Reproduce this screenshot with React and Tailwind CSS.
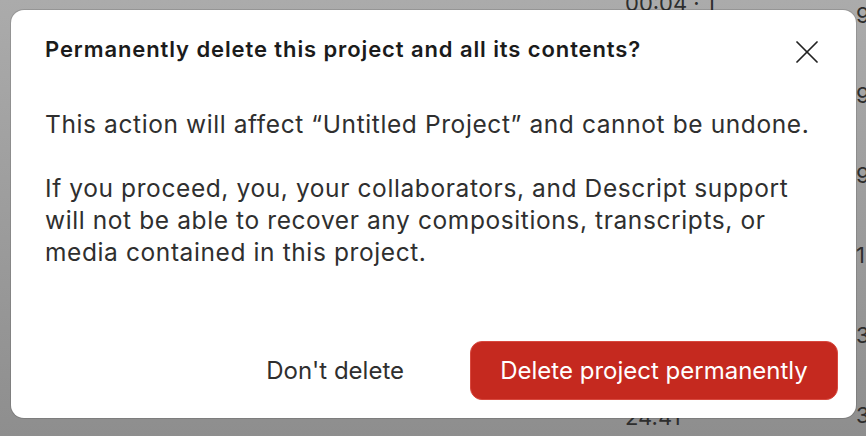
const font = { fontFamily: 'Inter, "Noto Sans", sans-serif' };

// ── Dimmed app behind the dialog ─────────────────────────────────────────────
function Backdrop() {
  const digits = ['9', '9', '9', '1', '3', '3'];
  return (
    <div className="absolute inset-0 bg-gradient-to-b from-[#ababab] to-[#8e8e8e] overflow-hidden">
      <div className="flex h-full">
        <div className="flex-1 flex flex-col justify-between pl-[625px]">
          <span className="text-[22px] leading-none text-[#2e2e2e] -mt-[8px]">00:04 · 1</span>
          <span className="text-[22px] leading-none text-[#2e2e2e] mb-[8px]">24.41</span>
        </div>
        <div className="w-[10px] flex flex-col gap-[58px] pt-[4px] text-[22px] leading-none text-[#2e2e2e]">
          {digits.map((d, i) => <span key={i}>{d}</span>)}
        </div>
      </div>
    </div>
  );
}

function CloseIcon() {
  return (
    <svg width="22" height="22" viewBox="0 0 22 22" fill="none" stroke="#222" strokeWidth="1.7" strokeLinecap="round">
      <line x1="1" y1="1" x2="21" y2="21" />
      <line x1="21" y1="1" x2="1" y2="21" />
    </svg>
  );
}

export default function App() {
  return (
    <div className="relative w-[866px] h-[436px] overflow-hidden" style={font}>
      <Backdrop />
      <div className="absolute left-[11px] top-[10px] w-[845px] h-[408px] bg-white rounded-[13px] shadow-[0_0_0_1px_rgba(0,0,0,0.12)] flex flex-col pl-[34px] pr-[18px] pt-[23px] pb-[18px]">
        <div className="flex items-start justify-between pr-[20px]">
          <h2 className="text-[22px] leading-[32px] font-semibold text-[#1b1b1b] tracking-[0.9px]">
            Permanently delete this project and all its contents?
          </h2>
          <button className="w-[22px] h-[22px] mt-[8px] flex items-center justify-center">
            <CloseIcon />
          </button>
        </div>
        <div className="mt-[43px] w-[775px] text-[24.5px] leading-[32px] text-[#2f2f2f] tracking-[0.6px]">
          <p>This action will affect “Untitled Project” and cannot be undone.</p>
          <p className="mt-[32px]">
            If you proceed, you, your collaborators, and Descript support will not be able to recover any compositions, transcripts, or media contained in this project.
          </p>
        </div>
        <div className="mt-auto flex items-center justify-end gap-[22px]">
          <button className="h-[59px] px-[44px] text-[24px] text-[#2f2f2f]">Don't delete</button>
          <button className="h-[59px] w-[368px] rounded-[12px] bg-[#c5291f] border border-[#d8483e] text-[24px] text-white">
            Delete project permanently
          </button>
        </div>
      </div>
    </div>
  );
}
